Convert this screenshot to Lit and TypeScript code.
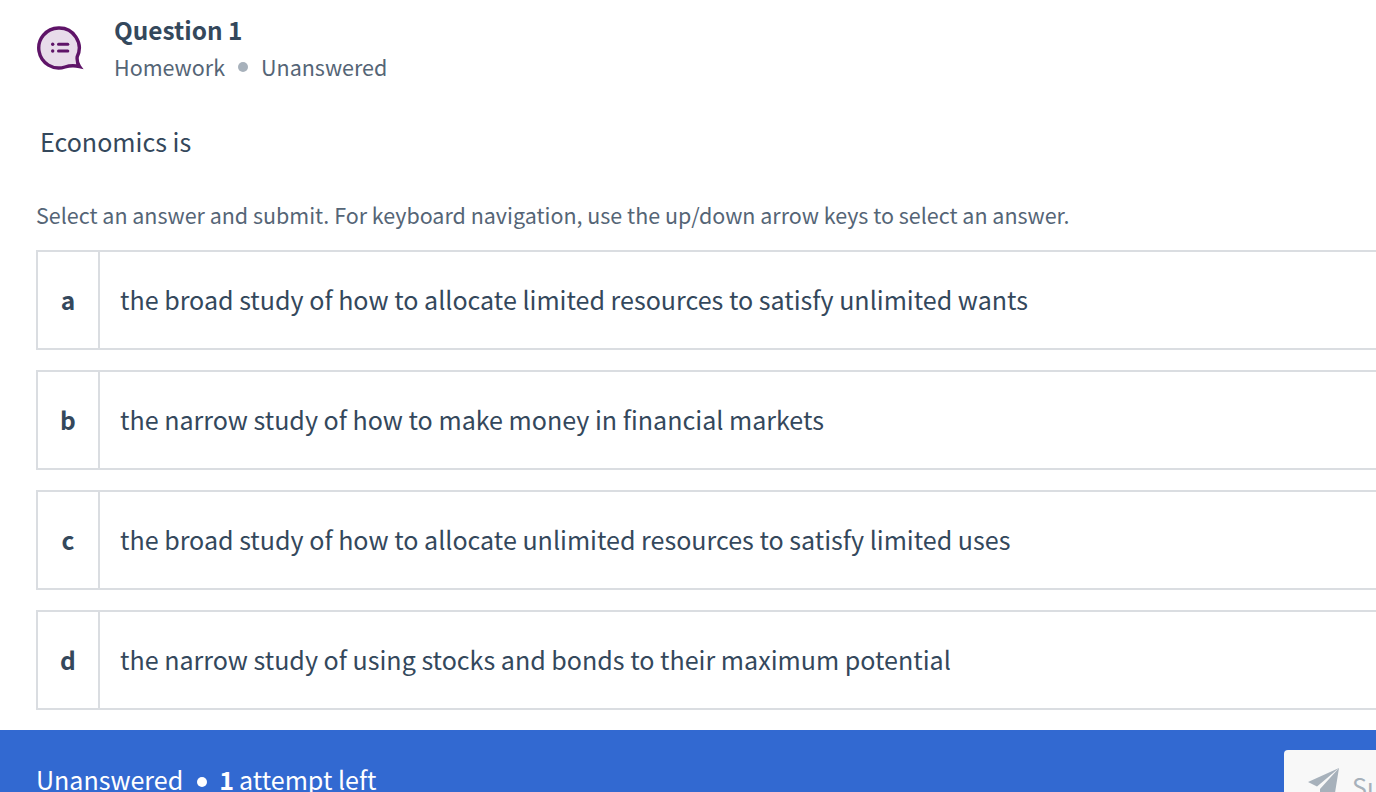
import {LitElement, html, css} from 'lit';
import {customElement} from 'lit/decorators.js';

const OPTIONS = [
  {key: 'a', text: 'the broad study of how to allocate limited resources to satisfy unlimited wants'},
  {key: 'b', text: 'the narrow study of how to make money in financial markets'},
  {key: 'c', text: 'the broad study of how to allocate unlimited resources to satisfy limited uses'},
  {key: 'd', text: 'the narrow study of using stocks and bonds to their maximum potential'},
];

@customElement('app-root')
export class AppRoot extends LitElement {
  static override styles = css`
    :host {
      display: block;
      height: 792px;
      overflow: hidden;
      background: #fff;
      font-family: 'Noto Sans CJK JP', 'Noto Sans', sans-serif;
      color: #34485c;
    }
    .page {
      width: 1560px;
    }
    .header {
      display: flex;
      align-items: flex-start;
      padding: 11px 0 0 36px;
      height: 97px;
      box-sizing: border-box;
    }
    .icon {
      width: 48px;
      height: 48px;
      margin-top: 14px;
      margin-right: 30px;
      flex: none;
    }
    .title {
      font-size: 24.4px;
      line-height: 38px;
      font-weight: 700;
    }
    .meta {
      display: flex;
      align-items: center;
      font-size: 21.5px;
      line-height: 36px;
      color: #556576;
    }
    .dot {
      width: 10px;
      height: 10px;
      border-radius: 50%;
      background: #a7b1bb;
      margin: 0 13px;
    }
    .stem {
      font-size: 25.07px;
      line-height: 40px;
      padding: 24px 0 0 40px;
      height: 74px;
      box-sizing: border-box;
    }
    .hint {
      font-size: 21.48px;
      line-height: 36px;
      color: #556576;
      padding: 26px 0 0 36px;
      height: 79px;
      box-sizing: border-box;
    }
    .options {
      display: flex;
      flex-direction: column;
      gap: 20px;
      padding-left: 36px;
    }
    .option {
      display: flex;
      height: 100px;
      box-sizing: border-box;
      border: 2px solid #dadde1;
      align-items: stretch;
    }
    .key {
      width: 60px;
      flex: none;
      border-right: 2px solid #dadde1;
      display: flex;
      align-items: center;
      justify-content: center;
      font-size: 24.5px;
      font-weight: 700;
      line-height: 36px;
    }
    .text {
      display: flex;
      align-items: center;
      padding: 0 0 2px 20px;
      font-size: 25.07px;
      line-height: 36px;
    }
    .bar {
      margin-top: 20px;
      height: 62px;
      background: #3269d1;
      color: #fff;
      display: flex;
      padding-left: 36px;
      overflow: hidden;
    }
    .status {
      display: flex;
      align-items: center;
      font-size: 25.07px;
      line-height: 36px;
      height: 36px;
      margin-top: 31px;
    }
    .status .sep {
      width: 10px;
      height: 10px;
      border-radius: 50%;
      background: #fff;
      margin: 6px 12px 0 14px;
    }
    .status b {
      font-weight: 700;
      margin-right: 5px;
    }
    .submit {
      margin-left: auto;
      margin-top: 20px;
      width: 276px;
      height: 80px;
      flex: none;
      border-radius: 4px 0 0 0;
      background: #f8f8f8;
      display: flex;
      align-items: flex-start;
      padding: 18px 0 0 24px;
      box-sizing: border-box;
      font-size: 25.07px;
      line-height: 36px;
      color: #a7b1bb;
    }
    .submit svg {
      width: 32px;
      height: 32px;
      margin-right: 12px;
      flex: none;
    }
  `;

  override render() {
    return html`
      <div class="page">
        <div class="header">
          <svg class="icon" viewBox="0 0 48 48">
            <path d="M22.5 3a20 20 0 1 0 6.500 39c4.500-1.500 9-1.800 14.500-.5-2.200-3-2.700-6-2.300-9.800A20 20 0 0 0 22.500 3z"
              fill="#e8dcea" stroke="#5f1468" stroke-width="3.4" stroke-linejoin="miter"/>
            <circle cx="16.700" cy="19.300" r="1.700" fill="#5f1468"/>
            <circle cx="16.700" cy="26" r="1.700" fill="#5f1468"/>
            <rect x="21" y="17.800" width="12.300" height="3" rx="1.500" fill="#5f1468"/>
            <rect x="21" y="24.500" width="12.300" height="3" rx="1.500" fill="#5f1468"/>
          </svg>
          <div>
            <div class="title">Question 1</div>
            <div class="meta">Homework<span class="dot"></span>Unanswered</div>
          </div>
        </div>
        <div class="stem">Economics is</div>
        <div class="hint">Select an answer and submit. For keyboard navigation, use the up/down arrow keys to select an answer.</div>
        <div class="options">
          ${OPTIONS.map(o => html`
            <div class="option">
              <div class="key">${o.key}</div>
              <div class="text">${o.text}</div>
            </div>
          `)}
        </div>
        <div class="bar">
          <div class="status">Unanswered<span class="sep"></span><b>1</b>attempt left</div>
          <div class="submit">
            <svg viewBox="0 0 32 32"><path d="M31 0 0 14l9 4.500L31 0zM31 0 12 21v10l5-5 9 5z" fill="#a7b1bb"/></svg>
            <span>Submit</span>
          </div>
        </div>
      </div>
    `;
  }
}
